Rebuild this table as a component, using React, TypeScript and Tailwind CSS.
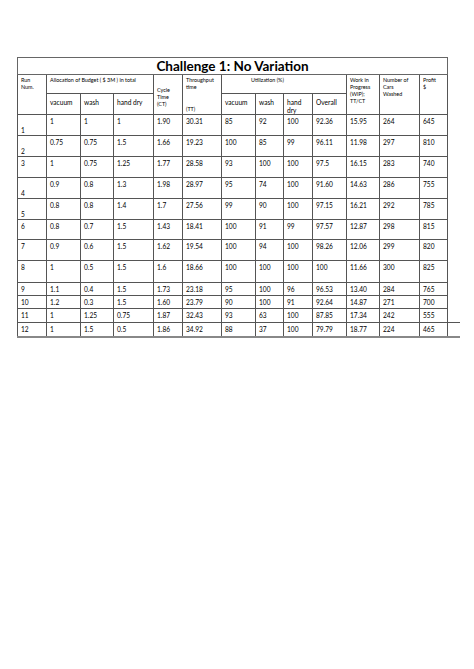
const widths = [29, 34, 33, 40, 29, 39, 34, 28, 29, 34, 33, 40, 28, 12]

const rows: { cells: string[]; h: string; numBottom?: boolean }[] = [
  { cells: ["1", "1", "1", "1", "1.90", "30.31", "85", "92", "100", "92.36", "15.95", "264", "645"], h: "h-[21px]", numBottom: true },
  { cells: ["2", "0.75", "0.75", "1.5", "1.66", "19.23", "100", "85", "99", "96.11", "11.98", "297", "810"], h: "h-[21px]", numBottom: true },
  { cells: ["3", "1", "0.75", "1.25", "1.77", "28.58", "93", "100", "100", "97.5", "16.15", "283", "740"], h: "h-[21px]" },
  { cells: ["4", "0.9", "0.8", "1.3", "1.98", "28.97", "95", "74", "100", "91.60", "14.63", "286", "755"], h: "h-[21px]", numBottom: true },
  { cells: ["5", "0.8", "0.8", "1.4", "1.7", "27.56", "99", "90", "100", "97.15", "16.21", "292", "785"], h: "h-[21px]", numBottom: true },
  { cells: ["6", "0.8", "0.7", "1.5", "1.43", "18.41", "100", "91", "99", "97.57", "12.87", "298", "815"], h: "h-[20px]" },
  { cells: ["7", "0.9", "0.6", "1.5", "1.62", "19.54", "100", "94", "100", "98.26", "12.06", "299", "820"], h: "h-[21px]" },
  { cells: ["8", "1", "0.5", "1.5", "1.6", "18.66", "100", "100", "100", "100", "11.66", "300", "825"], h: "h-[22px]" },
  { cells: ["9", "1.1", "0.4", "1.5", "1.73", "23.18", "95", "100", "96", "96.53", "13.40", "284", "765"], h: "h-[13px]" },
  { cells: ["10", "1.2", "0.3", "1.5", "1.60", "23.79", "90", "100", "91", "92.64", "14.87", "271", "700"], h: "h-[13px]" },
  { cells: ["11", "1", "1.25", "0.75", "1.87", "32.43", "93", "63", "100", "87.85", "17.34", "242", "555"], h: "h-[14px]" },
  { cells: ["12", "1", "1.5", "0.5", "1.86", "34.92", "88", "37", "100", "79.79", "18.77", "224", "465"], h: "h-[14px]" },
]

const cell = "border border-[#555] align-top px-[3px] pt-[2px]"
const head = "border border-[#555] align-top px-[3px] pt-[2px] text-[5.4px] leading-[7px] font-normal text-left"

export default function App() {
  return (
    <div className="min-h-screen w-[474px] bg-white pt-[57px] pl-[17px] font-[Lato,sans-serif] text-black">
      <table className="table-fixed border-collapse w-[442px] text-[6.6px] leading-[8px]">
        <colgroup>
          {widths.map((w, i) => (
            <col key={i} style={{ width: w }} />
          ))}
        </colgroup>
        <tbody>
          {/* Title */}
          <tr className="h-[17px]">
            <td colSpan={13} className="border border-[#666] text-center align-middle text-[13.5px] leading-[16px] font-bold">
              Challenge 1: No Variation
            </td>
            <td />
          </tr>

          {/* Header row 1 */}
          <tr className="h-[19px]">
            <th rowSpan={2} className={head}>
              Run
              <br />
              Num.
            </th>
            <th colSpan={3} className={head}>
              Allocation of Budget ( $ 3M ) in total
            </th>
            <th rowSpan={2} className={head + " !pt-[12px]"}>
              Cycle
              <br />
              Time
              <br />
              (CT)
            </th>
            <th rowSpan={2} className={head}>
              <div className="flex h-[36px] flex-col justify-between">
                <span>
                  Throughput
                  <br />
                  time
                </span>
                <span>(TT)</span>
              </div>
            </th>
            <th colSpan={4} className={head + " !pl-[29px]"}>
              Utilization (%)
            </th>
            <th rowSpan={2} className={head}>
              Work in
              <br />
              Progress
              <br />
              (WIP);
              <br />
              TT/CT
            </th>
            <th rowSpan={2} className={head}>
              Number of
              <br />
              Cars
              <br />
              Washed
            </th>
            <th rowSpan={2} className={head}>
              Profit
              <br />$
            </th>
            <td />
          </tr>

          {/* Header row 2 */}
          <tr className="h-[20px]">
            <td className={cell + " pt-[4px]"}>vacuum</td>
            <td className={cell + " pt-[4px]"}>wash</td>
            <td className={cell + " pt-[4px]"}>hand dry</td>
            <td className={cell + " pt-[4px]"}>vacuum</td>
            <td className={cell + " pt-[4px]"}>wash</td>
            <td className={cell + " pt-[4px]"}>
              hand
              <br />
              dry
            </td>
            <td className={cell + " pt-[4px]"}>Overall</td>
            <td />
          </tr>

          {rows.map((r, ri) => {
            const last = ri === rows.length - 1
            return (
              <tr key={ri} className={r.h}>
                {r.cells.map((c, ci) => (
                  <td
                    key={ci}
                    className={
                      cell +
                      (ci === 0 && r.numBottom ? " !align-bottom pb-[1px]" : "") +
                      (last ? " border-b-2 border-b-[#888]" : "")
                    }
                  >
                    {c}
                  </td>
                ))}
                {last ? <td className="border-t border-b-2 border-t-[#555] border-b-[#888]" /> : <td />}
              </tr>
            )
          })}
        </tbody>
      </table>
    </div>
  )
}
